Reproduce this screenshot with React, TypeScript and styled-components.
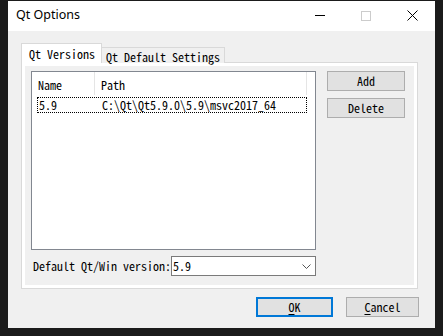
import React from "react";
import styled, { createGlobalStyle } from "styled-components";

const mono = `"Noto Sans Mono CJK SC", "Liberation Mono", monospace`;

const GlobalStyle = createGlobalStyle`
  html, body {
    margin: 0;
    padding: 0;
    background: #1b1b1b;
  }
  body {
    overflow: hidden;
  }
`;

const Window = styled.div`
  margin: 1px 0 0 8px;
  width: 427px;
  height: 327px;
  background: #f0f0f0;
  display: flex;
  flex-direction: column;
  font-family: ${mono};
  font-size: 12px;
  color: #000;
`;

const TitleBar = styled.div`
  height: 30px;
  flex-shrink: 0;
  background: #fff;
  display: flex;
  align-items: center;
`;

const Title = styled.div`
  flex: 1;
  padding-left: 8px;
  font-family: "Noto Sans", "Liberation Sans", sans-serif;
  font-size: 12.5px;
  line-height: 1;
  padding-bottom: 1px;
`;

const CaptionButton = styled.div`
  width: 46px;
  height: 30px;
  display: flex;
  align-items: center;
  justify-content: center;
`;

const Body = styled.div`
  flex: 1;
  padding: 12px 17px 0 13px;
  display: flex;
  flex-direction: column;
`;

const TabRow = styled.div`
  height: 20px;
  display: flex;
  align-items: flex-end;
`;

const Tab = styled.div<{ $active?: boolean }>`
  box-sizing: border-box;
  width: ${(p) => (p.$active ? "81px" : "123px")};
  height: ${(p) => (p.$active ? "20px" : "16px")};
  padding-left: ${(p) => (p.$active ? "7px" : "4px")};
  padding-top: ${(p) => (p.$active ? "1px" : "2px")};
  border: 1px solid #d9d9d9;
  border-bottom: none;
  border-left: ${(p) => (p.$active ? "1px solid #d9d9d9" : "none")};
  background: ${(p) => (p.$active ? "#fff" : "#f0f0f0")};
  position: ${(p) => (p.$active ? "relative" : "static")};
  z-index: ${(p) => (p.$active ? 1 : 0)};
  display: flex;
  align-items: center;
  line-height: 1;
  white-space: nowrap;
`;

const Pane = styled.div`
  box-sizing: border-box;
  margin-top: -1px;
  width: 397px;
  height: 227px;
  border: 1px solid #d9d9d9;
  background: #fff;
  padding: 3px;
`;

const Page = styled.div`
  box-sizing: border-box;
  height: 100%;
  background: #f0f0f0;
  padding: 5px 6px;
  display: flex;
  flex-direction: column;
`;

const TopRow = styled.div`
  display: flex;
  gap: 11px;
`;

const ListView = styled.div`
  box-sizing: border-box;
  width: 285px;
  height: 179px;
  border: 1px solid #828790;
  background: #fff;
`;

const Header = styled.div`
  display: flex;
  height: 23px;
`;

const HeaderCell = styled.div<{ $width: number }>`
  box-sizing: border-box;
  width: ${(p) => p.$width}px;
  padding-left: 6px;
  border-right: 1px solid #e5e5e5;
  display: flex;
  align-items: center;
  padding-top: 2px;
  line-height: 1;
`;

const Row = styled.div`
  box-sizing: border-box;
  margin: 2px 0 0 5px;
  width: 270px;
  height: 16px;
  border: 1px dotted #000;
  display: flex;
  align-items: center;
  line-height: 1;
`;

const RowCell = styled.div<{ $width: number; $pad: number }>`
  width: ${(p) => p.$width}px;
  padding-left: ${(p) => p.$pad}px;
  white-space: nowrap;
`;

const ButtonColumn = styled.div`
  display: flex;
  flex-direction: column;
  gap: 7px;
`;

const Button = styled.div<{ $width: number; $default?: boolean }>`
  box-sizing: border-box;
  width: ${(p) => p.$width}px;
  height: 20px;
  background: #e1e1e1;
  border: ${(p) => (p.$default ? "2px solid #0078d7" : "1px solid #adadad")};
  display: flex;
  align-items: center;
  justify-content: center;
  line-height: 1;
  u {
    text-decoration-thickness: 1px;
    text-underline-offset: 2px;
  }
`;

const ComboRow = styled.div`
  margin-top: 6px;
  display: flex;
  align-items: center;
`;

const ComboLabel = styled.div`
  width: 140px;
  padding-left: 2px;
  box-sizing: border-box;
  white-space: nowrap;
  line-height: 1;
`;

const Combo = styled.div`
  box-sizing: border-box;
  width: 145px;
  height: 20px;
  border: 1px solid #7a7a7a;
  background: #fff;
  display: flex;
  align-items: center;
  justify-content: space-between;
  padding: 0 4px 0 1px;
  line-height: 1;
`;

const Footer = styled.div`
  margin-top: 8px;
  margin-right: -1px;
  display: flex;
  justify-content: flex-end;
  gap: 13px;
`;

export default function App() {
  return (
    <>
      <GlobalStyle />
      <Window>
        <TitleBar>
          <Title>Qt Options</Title>
          <CaptionButton>
            <svg width="10" height="10" shapeRendering="crispEdges">
              <line x1="0" y1="4.5" x2="10" y2="4.5" stroke="#000" />
            </svg>
          </CaptionButton>
          <CaptionButton>
            <svg width="10" height="10" shapeRendering="crispEdges">
              <rect x="0.5" y="0.5" width="9" height="9" fill="none" stroke="#cccccc" />
            </svg>
          </CaptionButton>
          <CaptionButton>
            <svg width="11" height="11" style={{ marginBottom: 2 }}>
              <path d="M0.5 0.5 L10.5 10.5 M10.5 0.5 L0.5 10.5" stroke="#000" strokeWidth="1" />
            </svg>
          </CaptionButton>
        </TitleBar>
        <Body>
          <TabRow>
            <Tab $active>Qt Versions</Tab>
            <Tab>Qt Default Settings</Tab>
          </TabRow>
          <Pane>
            <Page>
              <TopRow>
                <ListView>
                  <Header>
                    <HeaderCell $width={63}>Name</HeaderCell>
                    <HeaderCell $width={212}>Path</HeaderCell>
                  </Header>
                  <Row>
                    <RowCell $width={57} $pad={1}>5.9</RowCell>
                    <RowCell $width={200} $pad={6}>C:\Qt\Qt5.9.0\5.9\msvc2017_64</RowCell>
                  </Row>
                </ListView>
                <ButtonColumn>
                  <Button $width={78}>Add</Button>
                  <Button $width={78}>Delete</Button>
                </ButtonColumn>
              </TopRow>
              <ComboRow>
                <ComboLabel>Default Qt/Win version:</ComboLabel>
                <Combo>
                  <span>5.9</span>
                  <svg width="9" height="5">
                    <path d="M0.5 0.5 L4.5 4.5 L8.5 0.5" fill="none" stroke="#555" strokeWidth="1" />
                  </svg>
                </Combo>
              </ComboRow>
            </Page>
          </Pane>
          <Footer>
            <Button $width={77} $default>
              <u>O</u>K
            </Button>
            <Button $width={73}>
              <u>C</u>ancel
            </Button>
          </Footer>
        </Body>
      </Window>
    </>
  );
}
